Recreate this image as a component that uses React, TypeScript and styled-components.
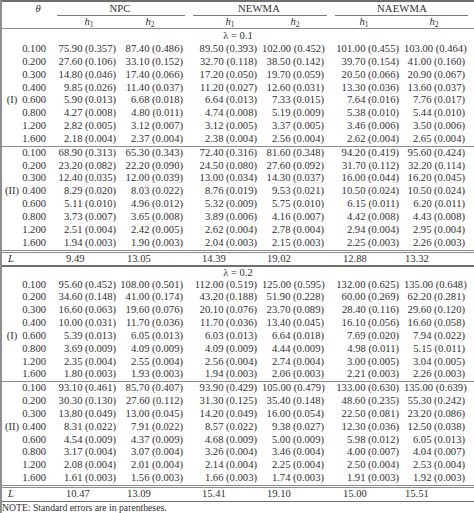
import React from "react";
import styled, { createGlobalStyle } from "styled-components";

const GlobalStyle = createGlobalStyle`
  html, body { margin: 0; padding: 0; background: #ffffff; }
`;

const COLS = "20px 30px 68px 68px 74px 68px 74px 70px";
const PAD_R = [4, 5, 5, 6, 5, 9];
const HEAD_SHIFT = [3, -4, 5, -1, -3, -5];
const L_PAD = [14, 7, 14, 5, 13, 1];
const THETAS = ["0.100", "0.200", "0.300", "0.400", "0.600", "0.800", "1.200", "1.600"];

const Page = styled.div`
  width: 474px;
  box-sizing: border-box;
  border-left: 2px solid #8f8f8f;
  font-family: "Liberation Serif", "Times New Roman", serif;
  font-size: 10.6px;
  color: #303030;
`;

const Rule = styled.div<{ $h: number; $color?: string }>`
  height: ${(p) => p.$h}px;
  background: ${(p) => p.$color ?? "#8c8c8c"};
`;

const DoubleRule = styled.div`
  height: 1px;
  border-top: 1px solid #8c8c8c;
  border-bottom: 1px solid #8c8c8c;
`;

const Row = styled.div<{ $h: number }>`
  display: grid;
  grid-template-columns: ${COLS};
  height: ${(p) => p.$h}px;
  line-height: ${(p) => p.$h}px;
  white-space: nowrap;
`;

const Cell = styled.div<{ $padR?: number }>`
  text-align: right;
  padding-right: ${(p) => p.$padR ?? 0}px;
`;

const LabelCell = styled.div<{ $left?: boolean }>`
  text-align: ${(p) => (p.$left ? "left" : "center")};
  padding-left: ${(p) => (p.$left ? 6 : 0)}px;
`;

const LCell = styled.div<{ $padL: number }>`
  text-align: left;
  padding-left: ${(p) => p.$padL}px;
`;

const HeadCell = styled.div<{ $shift: number }>`
  text-align: center;
  padding-left: ${(p) => Math.max(0, p.$shift * 2)}px;
  padding-right: ${(p) => Math.max(0, -p.$shift * 2)}px;
`;

const GroupHead = styled.div`
  grid-column: span 2;
  text-align: center;
  letter-spacing: 0.2px;
`;

const CMid = styled.div<{ $ml: number; $mr: number }>`
  grid-column: span 2;
  margin-left: ${(p) => p.$ml}px;
  margin-right: ${(p) => p.$mr}px;
  background: #7a7a7a;
`;

const SpanRow = styled.div<{ $h: number }>`
  height: ${(p) => p.$h}px;
  line-height: ${(p) => p.$h}px;
  text-align: center;
`;

const M = styled.i`
  font-style: italic;
`;

const Sub = styled.span`
  font-size: 7.5px;
  vertical-align: -2px;
  line-height: 0;
  font-style: normal;
`;

const Note = styled.div`
  height: 11px;
  line-height: 11px;
  font-size: 9.7px;
  white-space: nowrap;
`;

type Block = {
  lambda: string;
  g1: string[][];
  g2: string[][];
  L: string[];
};

const blocks: Block[] = [
  {
    lambda: "0.1",
    g1: [
      ["75.90 (0.357)", "87.40 (0.486)", "89.50 (0.393)", "102.00 (0.452)", "101.00 (0.455)", "103.00 (0.464)"],
      ["27.60 (0.106)", "33.10 (0.152)", "32.70 (0.118)", "38.50 (0.142)", "39.70 (0.154)", "41.00 (0.160)"],
      ["14.80 (0.046)", "17.40 (0.066)", "17.20 (0.050)", "19.70 (0.059)", "20.50 (0.066)", "20.90 (0.067)"],
      ["9.85 (0.026)", "11.40 (0.037)", "11.20 (0.027)", "12.60 (0.031)", "13.30 (0.036)", "13.60 (0.037)"],
      ["5.90 (0.013)", "6.68 (0.018)", "6.64 (0.013)", "7.33 (0.015)", "7.64 (0.016)", "7.76 (0.017)"],
      ["4.27 (0.008)", "4.80 (0.011)", "4.74 (0.008)", "5.19 (0.009)", "5.38 (0.010)", "5.44 (0.010)"],
      ["2.82 (0.005)", "3.12 (0.007)", "3.12 (0.005)", "3.37 (0.005)", "3.46 (0.006)", "3.50 (0.006)"],
      ["2.18 (0.004)", "2.37 (0.004)", "2.38 (0.004)", "2.56 (0.004)", "2.62 (0.004)", "2.65 (0.004)"],
    ],
    g2: [
      ["68.90 (0.313)", "65.30 (0.343)", "72.40 (0.316)", "81.60 (0.348)", "94.20 (0.419)", "95.60 (0.424)"],
      ["23.20 (0.082)", "22.20 (0.090)", "24.50 (0.080)", "27.60 (0.092)", "31.70 (0.112)", "32.20 (0.114)"],
      ["12.40 (0.035)", "12.00 (0.039)", "13.00 (0.034)", "14.30 (0.037)", "16.00 (0.044)", "16.20 (0.045)"],
      ["8.29 (0.020)", "8.03 (0.022)", "8.76 (0.019)", "9.53 (0.021)", "10.50 (0.024)", "10.50 (0.024)"],
      ["5.11 (0.010)", "4.96 (0.012)", "5.32 (0.009)", "5.75 (0.010)", "6.15 (0.011)", "6.20 (0.011)"],
      ["3.73 (0.007)", "3.65 (0.008)", "3.89 (0.006)", "4.16 (0.007)", "4.42 (0.008)", "4.43 (0.008)"],
      ["2.51 (0.004)", "2.42 (0.005)", "2.62 (0.004)", "2.78 (0.004)", "2.94 (0.004)", "2.95 (0.004)"],
      ["1.94 (0.003)", "1.90 (0.003)", "2.04 (0.003)", "2.15 (0.003)", "2.25 (0.003)", "2.26 (0.003)"],
    ],
    L: ["9.49", "13.05", "14.39", "19.02", "12.88", "13.32"],
  },
  {
    lambda: "0.2",
    g1: [
      ["95.60 (0.452)", "108.00 (0.501)", "112.00 (0.519)", "125.00 (0.595)", "132.00 (0.625)", "135.00 (0.648)"],
      ["34.60 (0.148)", "41.00 (0.174)", "43.20 (0.188)", "51.90 (0.228)", "60.00 (0.269)", "62.20 (0.281)"],
      ["16.60 (0.063)", "19.60 (0.076)", "20.10 (0.076)", "23.70 (0.089)", "28.40 (0.116)", "29.60 (0.120)"],
      ["10.00 (0.031)", "11.70 (0.036)", "11.70 (0.036)", "13.40 (0.045)", "16.10 (0.056)", "16.60 (0.058)"],
      ["5.39 (0.013)", "6.05 (0.013)", "6.03 (0.013)", "6.64 (0.018)", "7.69 (0.020)", "7.94 (0.022)"],
      ["3.69 (0.009)", "4.09 (0.009)", "4.09 (0.009)", "4.44 (0.009)", "4.98 (0.011)", "5.15 (0.011)"],
      ["2.35 (0.004)", "2.55 (0.004)", "2.56 (0.004)", "2.74 (0.004)", "3.00 (0.005)", "3.04 (0.005)"],
      ["1.80 (0.003)", "1.93 (0.003)", "1.94 (0.003)", "2.06 (0.003)", "2.21 (0.003)", "2.26 (0.003)"],
    ],
    g2: [
      ["93.10 (0.461)", "85.70 (0.407)", "93.90 (0.429)", "105.00 (0.479)", "133.00 (0.630)", "135.00 (0.639)"],
      ["30.30 (0.130)", "27.60 (0.112)", "31.30 (0.125)", "35.40 (0.148)", "48.60 (0.235)", "55.30 (0.242)"],
      ["13.80 (0.049)", "13.00 (0.045)", "14.20 (0.049)", "16.00 (0.054)", "22.50 (0.081)", "23.20 (0.086)"],
      ["8.31 (0.022)", "7.91 (0.022)", "8.57 (0.022)", "9.38 (0.027)", "12.30 (0.036)", "12.50 (0.038)"],
      ["4.54 (0.009)", "4.37 (0.009)", "4.68 (0.009)", "5.00 (0.009)", "5.98 (0.012)", "6.05 (0.013)"],
      ["3.17 (0.004)", "3.07 (0.004)", "3.26 (0.004)", "3.46 (0.004)", "4.00 (0.007)", "4.04 (0.007)"],
      ["2.08 (0.004)", "2.01 (0.004)", "2.14 (0.004)", "2.25 (0.004)", "2.50 (0.004)", "2.53 (0.004)"],
      ["1.61 (0.003)", "1.56 (0.003)", "1.66 (0.003)", "1.74 (0.003)", "1.91 (0.003)", "1.92 (0.003)"],
    ],
    L: ["10.47", "13.09", "15.41", "19.10", "15.00", "15.51"],
  },
];

const ROW_H = 12.85;

function Group({ rows, label, labelAt }: { rows: string[][]; label: string; labelAt: number }) {
  return (
    <>
      {rows.map((vals, i) => (
        <Row $h={ROW_H} key={i}>
          <LabelCell>{i === labelAt ? label : ""}</LabelCell>
          <Cell $padR={6}>{THETAS[i]}</Cell>
          {vals.map((v, j) => (
            <Cell key={j} $padR={PAD_R[j]}>
              {v}
            </Cell>
          ))}
        </Row>
      ))}
    </>
  );
}

function BlockView({ b, first }: { b: Block; first: boolean }) {
  return (
    <>
      <SpanRow $h={first ? 14 : 12}>λ = {b.lambda}</SpanRow>
      <Group rows={b.g1} label="(I)" labelAt={4} />
      <Rule $h={1} />
      <Group rows={b.g2} label="(II)" labelAt={3} />
      <DoubleRule />
      <Row $h={12.5}>
        <LabelCell $left>
          <M>L</M>
        </LabelCell>
        <div />
        {b.L.map((v, j) => (
          <LCell key={j} $padL={L_PAD[j]}>
            {v}
          </LCell>
        ))}
      </Row>
      <Rule $h={1.5} $color="#6f6f6f" />
    </>
  );
}

export default function App() {
  return (
    <>
      <GlobalStyle />
      <Page>
        <Rule $h={2} $color="#6f6f6f" />
        <Row $h={13}>
          <div />
          <HeadCell $shift={1}>
            <M>θ</M>
          </HeadCell>
          <GroupHead>NPC</GroupHead>
          <GroupHead>NEWMA</GroupHead>
          <GroupHead>NAEWMA</GroupHead>
        </Row>
        <Row $h={1}>
          <div />
          <div />
          <CMid $ml={5} $mr={3} />
          <CMid $ml={5} $mr={3} />
          <CMid $ml={5} $mr={6} />
        </Row>
        <Row $h={12}>
          <div />
          <div />
          {HEAD_SHIFT.map((s, j) => (
            <HeadCell key={j} $shift={s}>
              <M>h</M>
              <Sub>{j % 2 === 0 ? "1" : "2"}</Sub>
            </HeadCell>
          ))}
        </Row>
        <Rule $h={1} />
        {blocks.map((b, i) => (
          <BlockView key={i} b={b} first={i === 0} />
        ))}
        <Note>NOTE: Standard errors are in parentheses.</Note>
      </Page>
    </>
  );
}
